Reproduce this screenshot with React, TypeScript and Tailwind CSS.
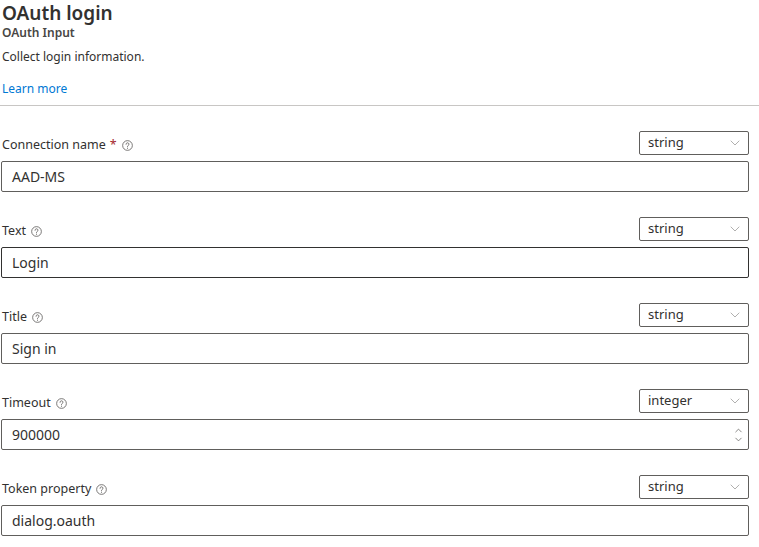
import { ChevronDown, ChevronUp } from "lucide-react";

const fields = [
  { label: "Connection name", required: true, type: "string", value: "AAD-MS" },
  { label: "Text", type: "string", value: "Login", active: true },
  { label: "Title", type: "string", value: "Sign in" },
  { label: "Timeout", type: "integer", value: "900000", number: true },
  { label: "Token property", type: "string", value: "dialog.oauth" },
];

function HelpIcon() {
  return (
    <svg width="11" height="11" viewBox="0 0 12 12" className="ml-[5px] text-[#605e5c]">
      <circle cx="6" cy="6" r="5.3" fill="none" stroke="currentColor" strokeWidth="0.9" />
      <path d="M4.4 4.7a1.6 1.6 0 1 1 2.3 1.4c-.5.25-.7.5-.7 1v.4" fill="none" stroke="currentColor" strokeWidth="0.9" strokeLinecap="round" />
      <circle cx="6" cy="9" r="0.55" fill="currentColor" />
    </svg>
  );
}

export default function App() {
  return (
    <div className="w-[759px] h-[547px] overflow-hidden bg-white text-[#323130]" style={{ fontFamily: '"Segoe UI", "Noto Sans", sans-serif' }}>
      <div className="pl-[2px] pt-[1px]">
        <h1 className="text-[19px] font-semibold leading-[24px]">OAuth login</h1>
        <div className="text-[12px] font-semibold leading-[16px] text-[#484644]">OAuth Input</div>
        <p className="text-[12px] leading-[16px] mt-[8px]">Collect login information.</p>
        <a className="block text-[12px] leading-[16px] mt-[16px] text-[#0078d4]">Learn more</a>
      </div>
      <div className="h-px bg-[#c8c6c4] mt-[8px]" />
      <div className="pt-[25px] pr-[10px] flex flex-col gap-[25px]">
        {fields.map((f) => (
          <div key={f.label}>
            <div className="flex items-center justify-between h-[24px]">
              <label className="flex items-center text-[12.5px] pl-[2px] mt-[5px]">
                {f.label}
                {f.required && <span className="text-[#a4262c] ml-[4px]">*</span>}
                <HelpIcon />
              </label>
              <div className="w-[110px] h-[24px] border border-[#605e5c] rounded-[2px] flex items-center justify-between pl-[8px] pr-[5px] text-[13px]">
                <span>{f.type}</span>
                <ChevronDown size={16} strokeWidth={1} className="text-[#8a8886]" />
              </div>
            </div>
            <div
              className={`mt-[6px] ml-px h-[31px] rounded-[2px] flex items-center justify-between pl-[10px] pr-[4px] text-[14px] border ${
                f.active ? "border-[#323130]" : "border-[#605e5c]"
              }`}
            >
              <span>{f.value}</span>
              {f.number && (
                <div className="flex flex-col items-center text-[#605e5c] -space-y-[2px]">
                  <ChevronUp size={11} strokeWidth={1.6} />
                  <ChevronDown size={11} strokeWidth={1.6} />
                </div>
              )}
            </div>
          </div>
        ))}
      </div>
    </div>
  );
}
